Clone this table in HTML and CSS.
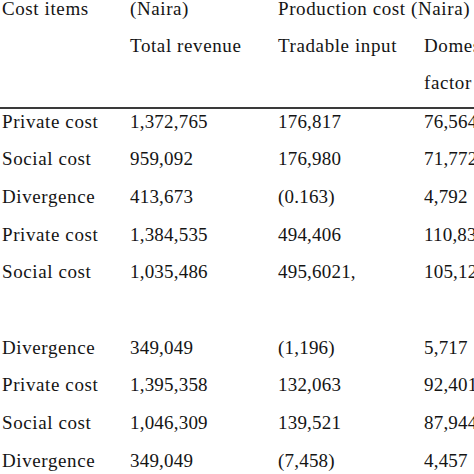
FILE: index.html
```html
<!DOCTYPE html>
<html>
<head>
<meta charset="utf-8">
<link rel="stylesheet" href="styles.css">
</head>
<body>
<table class="cost-table">
  <colgroup>
    <col class="c1"><col class="c2"><col class="c3"><col class="c4">
  </colgroup>
  <thead>
    <tr class="hrow first">
      <th>Cost items</th>
      <th>(Naira)</th>
      <th colspan="2">Production cost (Naira)</th>
    </tr>
    <tr class="hrow">
      <th></th>
      <th>Total revenue</th>
      <th>Tradable input</th>
      <th>Domestic</th>
    </tr>
    <tr class="hrow last">
      <th></th>
      <th></th>
      <th></th>
      <th>factor</th>
    </tr>
  </thead>
  <tbody>
    <tr><td>Private cost</td><td>1,372,765</td><td>176,817</td><td>76,564</td></tr>
    <tr><td>Social cost</td><td>959,092</td><td>176,980</td><td>71,772</td></tr>
    <tr><td>Divergence</td><td>413,673</td><td>(0.163)</td><td>4,792</td></tr>
    <tr><td>Private cost</td><td>1,384,535</td><td>494,406</td><td>110,835</td></tr>
    <tr><td>Social cost</td><td>1,035,486</td><td>495,6021,</td><td>105,122</td></tr>
    <tr class="empty"><td></td><td></td><td></td><td></td></tr>
    <tr><td>Divergence</td><td>349,049</td><td>(1,196)</td><td>5,717</td></tr>
    <tr><td>Private cost</td><td>1,395,358</td><td>132,063</td><td>92,401</td></tr>
    <tr><td>Social cost</td><td>1,046,309</td><td>139,521</td><td>87,944</td></tr>
    <tr><td>Divergence</td><td>349,049</td><td>(7,458)</td><td>4,457</td></tr>
  </tbody>
</table>
</body>
</html>
```
FILE: styles.css
```css
html, body {
  margin: 0;
  padding: 0;
  width: 474px;
  height: 474px;
  overflow: hidden;
  background: #ffffff;
}

.cost-table {
  font-family: "Liberation Serif", "Times New Roman", serif;
  font-size: 19px;
  letter-spacing: 0.6px;
  color: #141414;
  border-collapse: collapse;
  table-layout: fixed;
  width: 560px;
  margin: 0;
}

.c1 { width: 128px; }
.c2 { width: 148px; }
.c3 { width: 146px; }
.c4 { width: 138px; }

.cost-table th,
.cost-table td {
  font-weight: normal;
  text-align: left;
  white-space: nowrap;
  line-height: 22px;
  padding: 1.4px 0 13.6px 2px;
  vertical-align: top;
}

.hrow.first th {
  line-height: 17px;
  padding: 0 0 16.2px 2px;
}

.cost-table td {
  padding: 1.4px 0 14.3px 2px;
}

.cost-table td + td {
  letter-spacing: 0.2px;
}

.hrow.last th {
  border-bottom: 2px solid #3a3a3a;
}

.empty td {
  height: 22px;
}
```
